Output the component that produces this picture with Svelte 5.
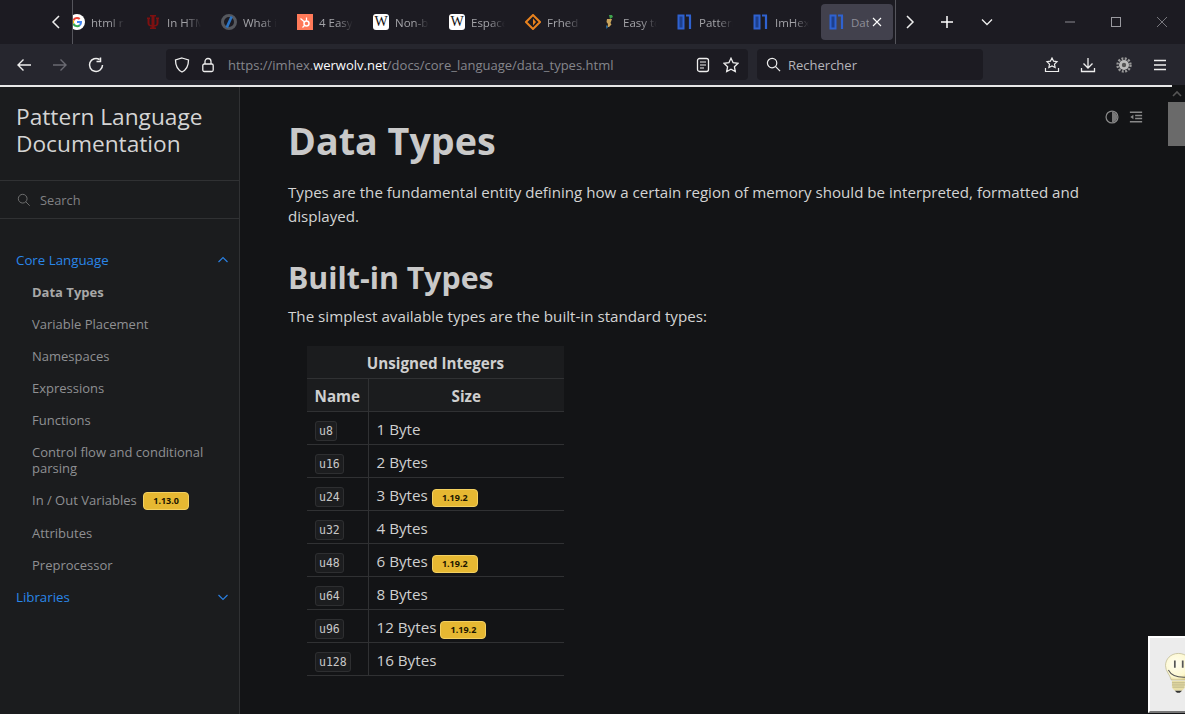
<script>
  const tabs = [
    { t: 'html r', i: 'g' }, { t: 'In HTML', i: 'iu' }, { t: 'What i', i: 'c' }, { t: '4 Easy', i: 'hs' },
    { t: 'Non-b', i: 'w' }, { t: 'Espace', i: 'w' }, { t: 'Frhed', i: 'f' }, { t: 'Easy to', i: 'e' },
    { t: 'Pattern', i: 'b' }, { t: 'ImHex', i: 'b' }, { t: 'Dat', i: 'b', active: true }
  ];
  const nav = ['Variable Placement', 'Namespaces', 'Expressions', 'Functions', 'Control flow and conditional parsing'];
  const rows = [
    ['u8', '1 Byte'], ['u16', '2 Bytes'], ['u24', '3 Bytes', '1.19.2'], ['u32', '4 Bytes'],
    ['u48', '6 Bytes', '1.19.2'], ['u64', '8 Bytes'], ['u96', '12 Bytes', '1.19.2'], ['u128', '16 Bytes']
  ];
</script>

{#snippet binIcon()}
  <svg class="fav" viewBox="0 0 16 16"><path d="M1.500 1.500h5v13h-5z" fill="#1d3f8c" stroke="#2f62d0" stroke-width="2"/><path d="M9 1.500h5M13 1.500v13.500" fill="none" stroke="#2f62d0" stroke-width="2.200"/></svg>
{/snippet}

<div class="page">
  <header class="tabbar">
    <svg class="ic scroll-l" viewBox="0 0 16 16"><path d="M11 2 5 8l6 6" fill="none" stroke="#eee" stroke-width="1.500"/></svg>
    <div class="tabs">
      <div class="tabs-inner">
        {#each tabs as tab}
          <div class="tab" class:active={tab.active}>
            {#if tab.i === 'g'}
              <svg class="fav" viewBox="0 0 16 16"><circle cx="8" cy="8" r="8" fill="#fff"/><path d="M8 3a5 5 0 0 1 3.400 1.300L10 5.700A3 3 0 0 0 5.200 7L3.500 5.700A5 5 0 0 1 8 3z" fill="#ea4335"/><path d="M3.500 5.700 5.200 7a3 3 0 0 0 0 2l-1.700 1.300a5 5 0 0 1 0-4.600z" fill="#fbbc05"/><path d="M3.500 10.300 5.200 9A3 3 0 0 0 10 10.500l1.600 1.200A5 5 0 0 1 3.500 10.300z" fill="#34a853"/><path d="M13 8c0 1.500-.5 2.800-1.400 3.700L10 10.500A2 2 0 0 0 10.800 9H8V7h4.900c.1.300.1.600.1 1z" fill="#4285f4"/></svg>
            {:else if tab.i === 'iu'}
              <svg class="fav" viewBox="0 0 16 16"><path d="M5 1h6v1.500H9.500V11H10c1 0 1.500-1 1.500-2V5H11V3.500h3V5h-.5v4c0 2-1.500 3.500-3.500 3.500h-.5v1H11V15H5v-1.500h1.500v-1H6C4 12.500 2.500 11 2.500 9V5H2V3.500h3V5h-.5v4c0 1 .5 2 1.500 2h.5V2.500H5z" fill="#7d1010"/></svg>
            {:else if tab.i === 'c'}
              <svg class="fav" viewBox="0 0 16 16"><circle cx="8" cy="8" r="6.500" fill="none" stroke="#55585e" stroke-width="3"/><path d="M9.500 2 11.800 3 7 14 4.500 13z" fill="#2a74c4"/></svg>
            {:else if tab.i === 'hs'}
              <svg class="fav" viewBox="0 0 16 16"><rect width="16" height="16" fill="#ff7a59"/><circle cx="9.500" cy="9.500" r="2.500" fill="none" stroke="#fff" stroke-width="1.500"/><path d="M9.500 7V3.500M7.500 8 3.500 4.500M7.500 11.500l-2 2" stroke="#fff" stroke-width="1.200"/></svg>
            {:else if tab.i === 'w'}
              <span class="wiki">W</span>
            {:else if tab.i === 'f'}
              <svg class="fav" viewBox="0 0 16 16"><path d="M8 1 15 8 8 15 1 8z" fill="none" stroke="#e8821e" stroke-width="2"/><path d="M8 4.500 11 8 8 11.500z" fill="#e8821e"/></svg>
            {:else if tab.i === 'e'}
              <svg class="fav" viewBox="0 0 16 16"><path d="M8 1l3 0 1 2-3 2z" fill="#3fa34d"/><path d="M6 5h5L9.500 9l1 1.500L8 13H6.500L7 10 5.500 8z" fill="#c9a45c"/><path d="M5 11l2 2-1.500 2z" fill="#2b7cb8"/></svg>
            {:else}
              {@render binIcon()}
            {/if}
            <span class="tab-t">{tab.t}</span>
            {#if tab.active}
              <svg class="close" viewBox="0 0 12 12"><path d="M2 2l8 8M10 2l-8 8" stroke="#fff" stroke-width="1.100"/></svg>
            {/if}
          </div>
        {/each}
      </div>
    </div>
    <svg class="ic scroll-r" viewBox="0 0 16 16"><path d="M5 2l6 6-6 6" fill="none" stroke="#eee" stroke-width="1.500"/></svg>
    <svg class="ic plus" viewBox="0 0 16 16"><path d="M8 2v12M2 8h12" stroke="#fff" stroke-width="1.500"/></svg>
    <svg class="ic chev" viewBox="0 0 16 16"><path d="M3 5.500l5 5 5-5" fill="none" stroke="#eee" stroke-width="1.300"/></svg>
    <div class="winbtns">
      <svg viewBox="0 0 12 12"><path d="M1 6h10" stroke="#8a8a90"/></svg>
      <svg viewBox="0 0 12 12"><rect x="1.500" y="1.500" width="9" height="9" fill="none" stroke="#9a9aa0"/></svg>
      <svg viewBox="0 0 12 12"><path d="M1 1l10 10M11 1 1 11" stroke="#77777d"/></svg>
    </div>
  </header>

  <div class="navbar">
    <div class="navbtns">
      <svg class="ic" viewBox="0 0 16 16"><path d="M15 8H2M7.500 2.500 2 8l5.500 5.500" fill="none" stroke="#eee" stroke-width="1.400"/></svg>
      <svg class="ic" viewBox="0 0 16 16"><path d="M1 8h13M8.500 2.500 14 8l-5.500 5.500" fill="none" stroke="#6a6a72" stroke-width="1.400"/></svg>
      <svg class="ic" viewBox="0 0 16 16"><path d="M14.500 8A6.500 6.500 0 1 1 11.500 2.500M12.500 .5v4H8.500" fill="none" stroke="#eee" stroke-width="1.500"/></svg>
    </div>
    <div class="urlbar">
      <svg class="ic" viewBox="0 0 16 16"><path d="M8 1 14.500 3c0 5.500-1.500 9.500-6.500 12C3 12.500 1.500 8.500 1.500 3z" fill="none" stroke="#eee" stroke-width="1.300"/></svg>
      <svg class="ic" viewBox="0 0 16 16"><rect x="2.800" y="7" width="10.400" height="7.500" rx="1.500" fill="none" stroke="#eee" stroke-width="1.300"/><path d="M5 7V4.500a3 3 0 0 1 6 0V7" fill="none" stroke="#eee" stroke-width="1.300"/></svg>
      <span class="url">https://imhex.<b>werwolv.net</b>/docs/core_language/data_types.html</span>
      <svg class="ic reader" viewBox="0 0 16 16"><rect x="2.500" y="1.500" width="11" height="13" rx="2" fill="none" stroke="#eee" stroke-width="1.300"/><path d="M5 5h6M5 8h6M5 11h4" stroke="#eee" stroke-width="1.200"/></svg>
      <svg class="ic" viewBox="0 0 16 16"><path d="M8 1.200l2.100 4.500 4.900.6-3.600 3.400.9 4.900L8 12.200l-4.300 2.400.9-4.900L1 6.300l4.900-.6z" fill="none" stroke="#eee" stroke-width="1.300"/></svg>
    </div>
    <div class="searchbar">
      <svg class="ic" viewBox="0 0 16 16"><circle cx="6.500" cy="6.500" r="5" fill="none" stroke="#eee" stroke-width="1.300"/><path d="M10 10l5 5" stroke="#eee" stroke-width="1.300"/></svg>
      <span>Rechercher</span>
    </div>
    <div class="tools">
      <svg class="ic" viewBox="0 0 16 16"><path d="M8 1l1.600 3.200 3.400.5-2.500 2.400.6 3.400L8 8.900l-3.100 1.600.6-3.400L3 4.700l3.400-.5z" fill="none" stroke="#eee" stroke-width="1.200"/><path d="M1.500 11v3.500h13V11" fill="none" stroke="#eee" stroke-width="1.200"/></svg>
      <svg class="ic" viewBox="0 0 16 16"><path d="M8 1v9.500M3.500 6.500 8 11l4.500-4.500M1.500 11v3.500h13V11" fill="none" stroke="#eee" stroke-width="1.300"/></svg>
      <svg class="ic" viewBox="0 0 16 16"><circle cx="8" cy="8" r="5" fill="#bbb"/><circle cx="8" cy="8" r="6.500" fill="none" stroke="#999" stroke-width="2.400" stroke-dasharray="2 1.400"/><circle cx="8" cy="8" r="2.200" fill="#555"/></svg>
      <svg class="ic" viewBox="0 0 16 16"><path d="M2 3.500h12M2 8h12M2 12.500h12" stroke="#eee" stroke-width="1.400"/></svg>
    </div>
  </div>
  <div class="loadline"><i></i></div>

  <div class="body">
    <aside class="sidebar">
      <div class="brand">Pattern Language Documentation</div>
      <div class="search">
        <svg viewBox="0 0 16 16"><circle cx="6.500" cy="6.500" r="5" fill="none" stroke="#777" stroke-width="1"/><path d="M10 10l4.500 4.500" stroke="#777"/></svg>
        <span>Search</span>
      </div>
      <nav class="menu">
        <div class="sec"><span>Core Language</span><svg viewBox="0 0 12 12"><path d="M1.500 8 6 3.500 10.500 8" fill="none" stroke="#2a7fe0" stroke-width="1.200"/></svg></div>
        <div class="item current">Data Types</div>
        {#each nav as n}<div class="item">{n}</div>{/each}
        <div class="item versioned">In / Out Variables <span class="badge side">1.13.0</span></div>
        <div class="item">Attributes</div>
        <div class="item">Preprocessor</div>
        <div class="sec"><span>Libraries</span><svg viewBox="0 0 12 12"><path d="M1.500 4 6 8.500 10.500 4" fill="none" stroke="#2a7fe0" stroke-width="1.200"/></svg></div>
      </nav>
    </aside>

    <main class="content">
      <div class="pagetools">
        <svg viewBox="0 0 16 16"><circle cx="8" cy="8" r="6.800" fill="none" stroke="#888" stroke-width="1.400"/><path d="M8 2a6 6 0 0 1 0 12z" fill="#777"/></svg>
        <svg viewBox="0 0 16 16"><path d="M1 2.500h14M7 6.300h8M7 9.700h8M1 13.500h14" stroke="#888" stroke-width="1.600"/><path d="M5 5.500 1.500 8 5 10.500z" fill="#888"/></svg>
      </div>
      <h1>Data Types</h1>
      <p class="lead">Types are the fundamental entity defining how a certain region of memory should be interpreted, formatted and displayed.</p>
      <h2>Built-in Types</h2>
      <p class="sub">The simplest available types are the built-in standard types:</p>
      <table>
        <colgroup><col class="col1" /><col /></colgroup>
        <thead>
          <tr class="group"><th colspan="2">Unsigned Integers</th></tr>
          <tr><th class="c1">Name</th><th>Size</th></tr>
        </thead>
        <tbody>
          {#each rows as r}
            <tr>
              <td class="c1"><code>{r[0]}</code></td>
              <td>{r[1]}{#if r[2]}<span class="badge">{r[2]}</span>{/if}</td>
            </tr>
          {/each}
        </tbody>
      </table>
    </main>

    <div class="scrollbar">
      <svg viewBox="0 0 12 8"><path d="M2 6l4-4 4 4" fill="none" stroke="#555" stroke-width="1.600"/></svg>
      <div class="thumb"></div>
    </div>

    <div class="clippy">
      <svg viewBox="0 0 38 60">
        <defs><radialGradient id="bulb" cx="40%" cy="40%" r="70%"><stop offset="0" stop-color="#fffef2"/><stop offset="0.7" stop-color="#fdf8cf"/><stop offset="1" stop-color="#d9c77c"/></radialGradient></defs>
        <path d="M20 2C9 2 2 10 2 19c0 8 6 12 8 20h20c2-8 8-12 8-20C38 10 31 2 20 2z" fill="url(#bulb)" stroke="#bdb78f"/>
        <path d="M15 12v10M26 12v10" stroke="#555" stroke-width="2.400"/>
        <path d="M6 25c4 8 12 11 26 10" fill="none" stroke="#555" stroke-width="1.400"/>
        <path d="M11 40h18v10l-4 4H15l-4-4z" fill="#e8dfa8"/>
        <path d="M11 43h18M11 46h18M12 49h16" stroke="#a9a27a" stroke-width="1"/>
        <path d="M15 54h10l-3 3h-4z" fill="#333"/>
      </svg>
    </div>
  </div>
</div>

<style>
  :global(body) { margin: 0; background: #131416; overflow: hidden; }
  .page { width: 1185px; height: 714px; display: flex; flex-direction: column; overflow: hidden; position: relative; font-family: "Open Sans", "Noto Sans", sans-serif; color: #d0d0d0; }
  .ic { width: 16px; height: 16px; flex: none; display: block; }

  .tabbar { height: 44px; background: #1c1b22; display: flex; align-items: center; flex: none; position: relative; }
  .scroll-l { margin-left: 48px; }
  .tabs { width: 822px; height: 44px; margin-left: 8px; border-left: 1px solid #55555c; border-right: 1px solid #55555c; overflow: hidden; display: flex; align-items: center; flex: none; }
  .tabs-inner { display: flex; gap: 4px; margin-left: -12px; }
  .tab { width: 72px; height: 36px; flex: none; border-radius: 4px; box-sizing: border-box; padding: 0 8px; display: flex; align-items: center; gap: 6px; position: relative; }
  .tab.active { background: #42414d; }
  .fav { width: 16px; height: 16px; flex: none; display: block; }
  .wiki { width: 16px; height: 16px; flex: none; background: #fff; border-radius: 3px; color: #111; font: 400 14px/16px "Liberation Serif", serif; text-align: center; }
  .tab-t { font-size: 11.500px; color: #a3a3a8; white-space: nowrap; overflow: hidden; width: 34px; flex: none; -webkit-mask-image: linear-gradient(90deg, #000 55%, transparent); mask-image: linear-gradient(90deg, #000 55%, transparent); }
  .active .tab-t { color: #8f8f98; width: 18px; -webkit-mask-image: none; mask-image: none; }
  .close { position: absolute; right: 10px; top: 12px; width: 12px; height: 12px; }
  .scroll-r { margin-left: 6px; }
  .plus { margin-left: 21px; }
  .chev { margin-left: 24px; }
  .winbtns { margin-left: auto; margin-right: 17px; display: flex; gap: 34px; }
  .winbtns svg { width: 12px; height: 12px; display: block; }

  .navbar { height: 41px; background: #26262e; display: flex; align-items: center; flex: none; }
  .navbtns { display: flex; gap: 20px; margin-left: 16px; width: 150px; flex: none; }
  .urlbar { width: 582px; height: 31px; background: #1c1b22; border-radius: 4px; display: flex; align-items: center; gap: 10px; padding: 0 9px 0 8px; box-sizing: border-box; flex: none; }
  .url { font-size: 13px; color: #85868c; margin-left: 2px; flex: 1; white-space: nowrap; overflow: hidden; }
  .url b { font-weight: 400; color: #fbfbfe; }
  .reader { margin-right: 2px; }
  .searchbar { width: 226px; height: 31px; margin-left: 9px; background: #1c1b22; border-radius: 4px; display: flex; align-items: center; gap: 7px; padding-left: 9px; box-sizing: border-box; flex: none; font-size: 13px; color: #b5b5bb; }
  .searchbar .ic { width: 15px; height: 15px; }
  .tools { display: flex; gap: 20px; margin-left: 61px; }

  .loadline { height: 2px; background: #131416; flex: none; }
  .loadline i { display: block; width: 1172px; height: 2px; background: #e8e8e8; }

  .body { flex: 1; display: flex; position: relative; min-height: 0; }
  .sidebar { width: 240px; flex: none; box-sizing: border-box; background: #1b1c1e; border-right: 1px solid #303133; overflow: hidden; }
  .brand { font-size: 22.700px; line-height: 27px; color: #d4d4d4; padding: 16px 16px 0; height: 94px; box-sizing: border-box; border-bottom: 1px solid #303133; }
  .search { height: 38px; box-sizing: border-box; border-bottom: 1px solid #303133; display: flex; align-items: center; gap: 9px; padding-left: 17px; font-size: 12.800px; color: #808184; }
  .search svg { width: 14px; height: 14px; }
  .menu { padding-top: 25px; font-size: 13px; }
  .sec { height: 32px; display: flex; align-items: center; justify-content: space-between; padding: 0 10px 0 16px; color: #2a86e8; font-size: 13.300px; }
  .sec svg { width: 12px; height: 12px; }
  .item { padding: 8px 20px 8px 32px; line-height: 16px; color: #8f9093; }
  .item.versioned { padding-bottom: 9px; }
  .item.current { font-weight: 700; color: #a8a8a8; }

  .content { flex: 1; min-width: 0; position: relative; padding-left: 48px; padding-right: 100px; }
  h1 { margin: 28px 0 0; font-size: 37.700px; line-height: 52px; font-weight: 700; color: #c9c9c9; }
  .lead { margin: 13px 0 0; font-size: 15.120px; line-height: 24px; color: #d4d4d4; }
  h2 { margin: 28px 0 0; font-size: 30.300px; line-height: 44px; font-weight: 700; color: #c9c9c9; }
  .sub { margin: 4px 0 0; font-size: 15.180px; line-height: 24px; color: #d4d4d4; }
  table { margin: 18px 0 0 19px; border-collapse: collapse; width: 257px; font-size: 15.200px; table-layout: fixed; }
  .col1 { width: 61px; }
  th { background: #1b1c1e; height: 33px; padding: 3px 0 0; font-size: 15.200px; font-weight: 700; color: #cfcfcf; border-bottom: 1px solid #303133; box-sizing: border-box; }
  .group th { height: 32px; padding-top: 2px; }
  td { height: 33px; padding: 3px 0 0 8px; border-bottom: 1px solid #303133; color: #cfcfcf; box-sizing: border-box; white-space: nowrap; }
  td.c1 { padding-left: 8px; }
  .c1 { border-right: 1px solid #303133; }
  code { font: 11.500px "DejaVu Sans Mono", "Liberation Mono", monospace; color: #c8c8c8; background: #1c1d1f; border: 1px solid #2e2f31; border-radius: 3px; padding: 2px 3px; }
  .badge { display: inline-block; width: 46px; height: 18px; margin: -3px 0 -3px 4px; box-sizing: border-box; background: #e6b832; border: 1px solid #f3d060; border-radius: 4px; font-size: 9px; font-weight: 700; line-height: 16px; text-align: center; color: #1b1500; vertical-align: 0; }
  .badge.side { margin-left: 3px; vertical-align: 1px; }

  .pagetools { position: absolute; top: 23px; right: 42px; display: flex; gap: 10px; }
  .pagetools svg { width: 14px; height: 14px; display: block; }

  .scrollbar { position: absolute; right: 0; top: 0; width: 17px; height: 100%; background: #131416; }
  .scrollbar svg { display: block; width: 12px; height: 8px; margin: 3px auto 0 3px; }
  .thumb { margin-top: 4px; height: 44px; background: #6a6a6a; }

  .clippy { position: absolute; left: 1148px; top: 549px; width: 37px; height: 77px; box-sizing: border-box; background: #ececec; border-left: 2px solid #fff; border-top: 2px solid #fff; border-bottom: 2px solid #777; overflow: hidden; }
  .clippy svg { display: block; width: 27.400px; height: 43px; margin: 14px 0 0 14px; }
</style>
